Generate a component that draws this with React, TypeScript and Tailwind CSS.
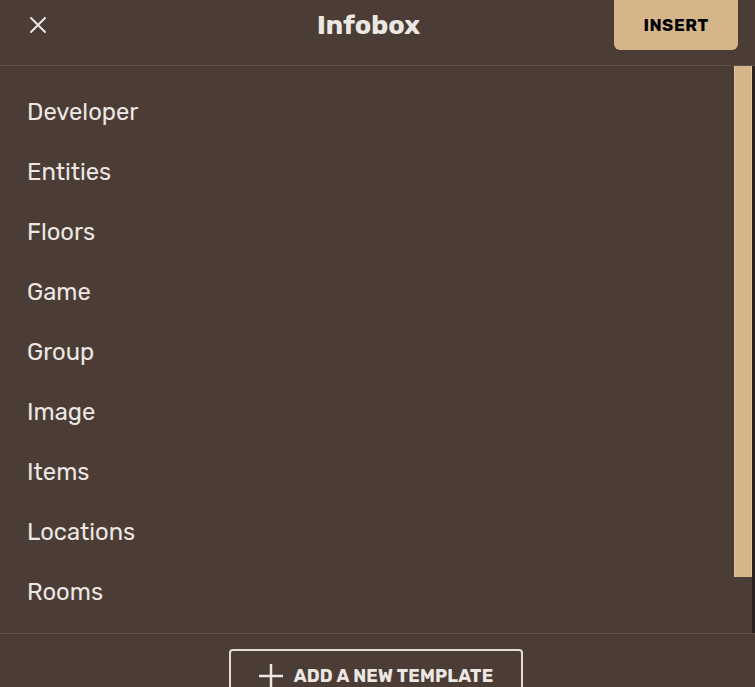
import React from "react";

const items = ["Developer", "Entities", "Floors", "Game", "Group", "Image", "Items", "Locations", "Rooms"];

export default function App() {
  return (
    <div className="w-[755px] h-[687px] bg-[#4b3c36] overflow-hidden flex flex-col text-[#ece7e3]" style={{ fontFamily: "Rubik, Inter, 'Noto Sans', sans-serif" }}>
      <div className="h-[66px] shrink-0 border-b border-[#5e4f49] flex items-start relative">
        <button className="absolute left-[29px] top-[16px] w-[18px] h-[18px] flex items-center justify-center">
          <svg width="18" height="18" viewBox="0 0 18 18" fill="none" stroke="#ece7e3" strokeWidth="2" strokeLinecap="round">
            <path d="M2 2 L16 16 M16 2 L2 16" />
          </svg>
        </button>
        <div className="flex-1 flex justify-center pt-[9px]">
          <span className="text-[27px] font-bold leading-[32px] ml-[-18px]">Infobox</span>
        </div>
        <button className="absolute left-[614px] top-0 w-[124px] h-[50px] bg-[#d5b68b] rounded-b-[6px] text-black text-[17px] font-bold tracking-[0.5px] flex items-center justify-center pt-[2px]">
          INSERT
        </button>
      </div>
      <div className="h-[568px] shrink-0 flex border-b border-[#5e4f49] overflow-hidden">
        <div className="flex-1 pt-[17px] pl-[27px]">
          {items.map((it) => (
            <div key={it} className="h-[60px] flex items-center text-[23.8px]">{it}</div>
          ))}
        </div>
        <div className="w-[22px] flex">
          <div className="w-[19px] ml-[1px]">
            <div className="h-[511px] bg-[#d5b68b] border-x border-[#e2c9a3]"></div>
          </div>
          <div className="w-[3px] bg-[#2c2220]"></div>
        </div>
      </div>
      <div className="flex-1 flex justify-center pt-[15px]">
        <div className="w-[294px] h-[60px] ml-[-4px] border-2 border-[#e3dcd6] rounded-t-[4px] flex items-start justify-center pt-[12px] gap-[10px]">
          <svg width="26" height="26" viewBox="0 0 26 26" fill="none" stroke="#ece7e3" strokeWidth="2.5">
            <path d="M13 1 V25 M1 13 H25" />
          </svg>
          <span className="text-[18px] font-bold leading-[26px] tracking-[0.2px]">ADD A NEW TEMPLATE</span>
        </div>
      </div>
    </div>
  );
}
